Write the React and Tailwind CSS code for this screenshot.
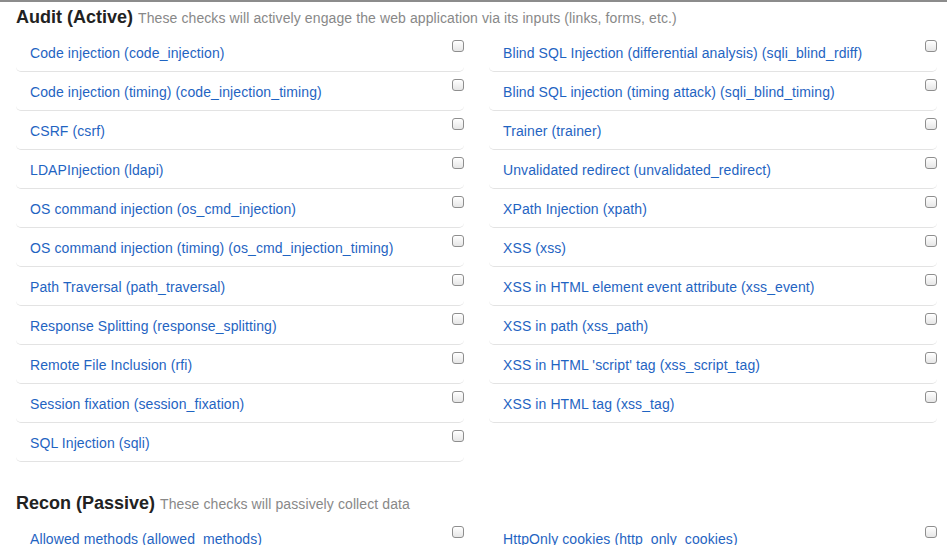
import React from "react";

const audit = {
  left: [
    "Code injection (code_injection)",
    "Code injection (timing) (code_injection_timing)",
    "CSRF (csrf)",
    "LDAPInjection (ldapi)",
    "OS command injection (os_cmd_injection)",
    "OS command injection (timing) (os_cmd_injection_timing)",
    "Path Traversal (path_traversal)",
    "Response Splitting (response_splitting)",
    "Remote File Inclusion (rfi)",
    "Session fixation (session_fixation)",
    "SQL Injection (sqli)",
  ],
  right: [
    "Blind SQL Injection (differential analysis) (sqli_blind_rdiff)",
    "Blind SQL injection (timing attack) (sqli_blind_timing)",
    "Trainer (trainer)",
    "Unvalidated redirect (unvalidated_redirect)",
    "XPath Injection (xpath)",
    "XSS (xss)",
    "XSS in HTML element event attribute (xss_event)",
    "XSS in path (xss_path)",
    "XSS in HTML 'script' tag (xss_script_tag)",
    "XSS in HTML tag (xss_tag)",
  ],
};

const recon = {
  left: ["Allowed methods (allowed_methods)"],
  right: ["HttpOnly cookies (http_only_cookies)"],
};

function CheckRow({ label }) {
  return (
    <div className="flex justify-between items-start border-b border-[#e3e3e3] rounded-b-[5px]">
      <a href="#" className="pl-[14px] pt-[10px] pb-[8px] leading-5 text-[14px] tracking-[0.1px] text-[#1f64c2]">
        {label}
      </a>
      <span className="mt-[7px] w-[12px] h-[12px] rounded-[3px] border border-[#8e8e8e] bg-gradient-to-b from-white to-[#e6e6e6] shadow-[inset_0_1px_0_#fff]" />
    </div>
  );
}

function Section({ title, desc, data }) {
  return (
    <div>
      <div className="h-[31px] pt-[2px] flex items-baseline gap-[5px]">
        <span className="text-[18px] font-bold text-[#222]">{title}</span>
        <span className="text-[14px] tracking-[0.1px] text-[#888]">{desc}</span>
      </div>
      <div className="flex gap-[25px]">
        <div className="w-[448px] flex flex-col">
          {data.left.map((l) => (
            <CheckRow key={l} label={l} />
          ))}
        </div>
        <div className="w-[448px] flex flex-col">
          {data.right.map((l) => (
            <CheckRow key={l} label={l} />
          ))}
        </div>
      </div>
    </div>
  );
}

export default function App() {
  return (
    <div
      className="w-[947px] h-[545px] overflow-hidden bg-white border-t-2 border-[#8c8c8c] pl-[16px]"
      style={{ fontFamily: '"Liberation Sans", Arial, sans-serif' }}
    >
      <Section
        title="Audit (Active)"
        desc="These checks will actively engage the web application via its inputs (links, forms, etc.)"
        data={audit}
      />
      <div className="h-[26px]" />
      <Section
        title="Recon (Passive)"
        desc="These checks will passively collect data"
        data={recon}
      />
    </div>
  );
}
